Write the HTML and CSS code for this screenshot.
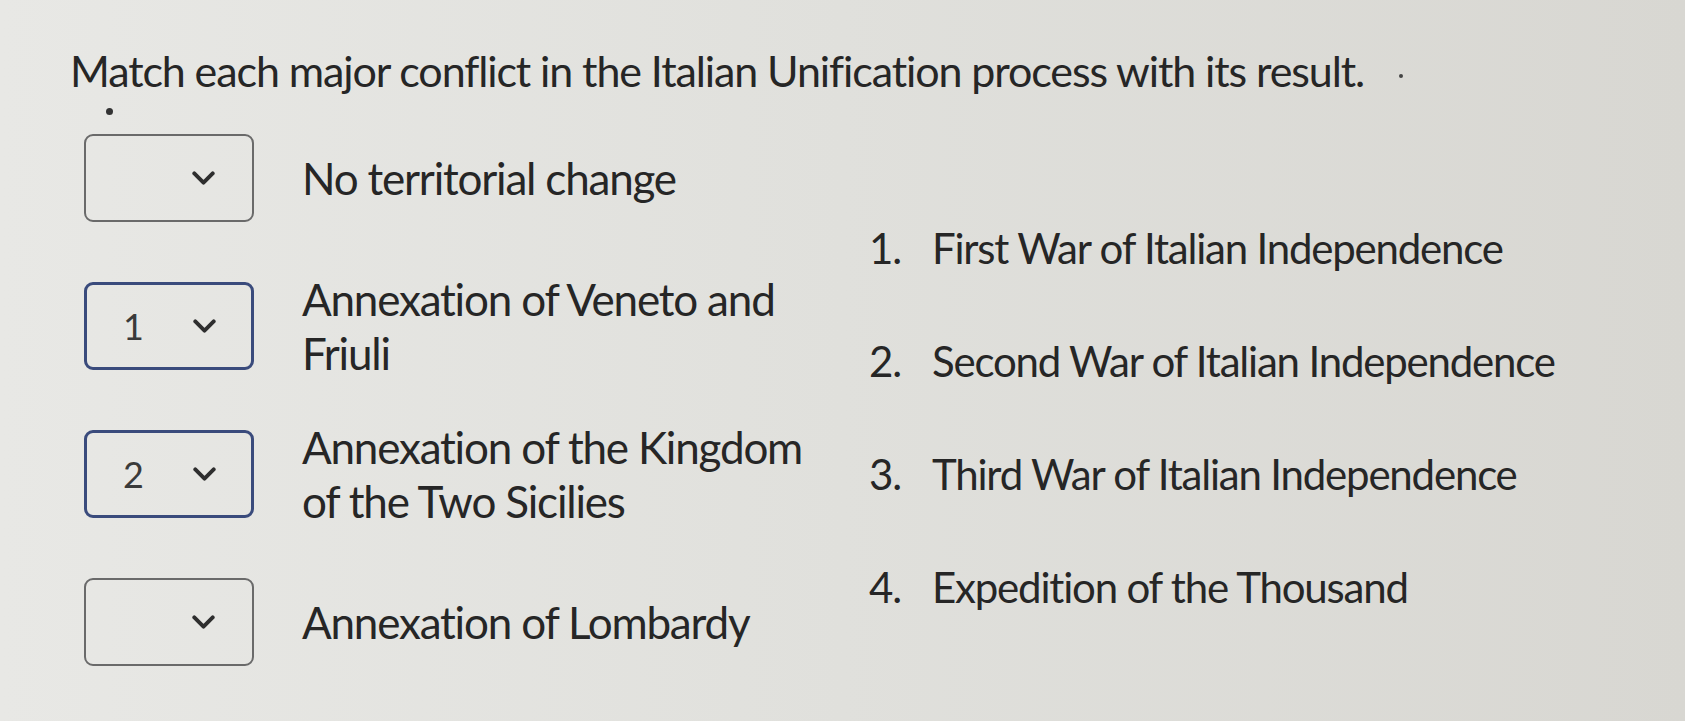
FILE: index.html
```html
<!DOCTYPE html>
<html lang="en">
<head>
    <meta charset="UTF-8">
    <meta name="viewport" content="width=device-width, initial-scale=1.0">
    <title>Matching Question</title>
    <link rel="stylesheet" href="styles.css">
</head>
<body>
    <div class="question">
        <h1 class="prompt">Match each major conflict in the Italian Unification process with its result.<span class="speck"></span></h1>
        <div class="match">
            <div class="answers">
                <div class="row">
                    <div class="select">
                        <span class="dot"></span>
                        <span class="value"></span>
                        <svg class="chevron" viewBox="0 0 20 12"><path d="M2 2 L10 10 L18 2"/></svg>
                    </div>
                    <div class="label">No territorial change</div>
                </div>
                <div class="row">
                    <div class="select filled">
                        <span class="value">1</span>
                        <svg class="chevron" viewBox="0 0 20 12"><path d="M2 2 L10 10 L18 2"/></svg>
                    </div>
                    <div class="label">Annexation of Veneto and Friuli</div>
                </div>
                <div class="row">
                    <div class="select filled">
                        <span class="value">2</span>
                        <svg class="chevron" viewBox="0 0 20 12"><path d="M2 2 L10 10 L18 2"/></svg>
                    </div>
                    <div class="label">Annexation of the Kingdom of the Two Sicilies</div>
                </div>
                <div class="row">
                    <div class="select">
                        <span class="value"></span>
                        <svg class="chevron" viewBox="0 0 20 12"><path d="M2 2 L10 10 L18 2"/></svg>
                    </div>
                    <div class="label">Annexation of Lombardy</div>
                </div>
            </div>
            <ol class="choices">
                <li>First War of Italian Independence</li>
                <li>Second War of Italian Independence</li>
                <li>Third War of Italian Independence</li>
                <li>Expedition of the Thousand</li>
            </ol>
        </div>
    </div>
</body>
</html>
```
FILE: styles.css
```css
body {
    font-family: Lato, "Open Sans", sans-serif;
    margin: 0;
    padding: 0;
    color: #262626;
    background: linear-gradient(90deg, #e8e8e5 0%, #e0e0dc 50%, #d8d7d2 100%);
    height: 100vh;
    overflow: hidden;
}
.question {
    padding: 38px 0 0 70px;
}
.prompt {
    position: relative;
    font-size: 43px;
    font-weight: 400;
    letter-spacing: -1.1px;
    margin: 0;
    line-height: 66px;
    height: 66px;
}
.speck {
    position: absolute;
    left: 1329px;
    top: 36px;
    width: 4px;
    height: 4px;
    border-radius: 50%;
    background: #444;
}
.match {
    display: flex;
}
.answers {
    width: 785px;
    padding-left: 14px;
}
.row {
    display: flex;
    align-items: center;
    height: 148px;
    gap: 48px;
}
.select {
    position: relative;
    flex: none;
    width: 170px;
    height: 88px;
    border: 2px solid #6a6a6a;
    border-radius: 9px;
    display: flex;
    align-items: center;
    padding-left: 36px;
    box-sizing: border-box;
}
.select.filled {
    border: 3px solid #3a4b7c;
}
.dot {
    position: absolute;
    left: 20px;
    top: -28px;
    width: 7px;
    height: 7px;
    border-radius: 50%;
    background: #333;
}
.value {
    width: 70px;
    font-size: 36px;
    color: #3a3a3a;
}
.chevron {
    width: 23px;
    height: 14px;
}
.chevron path {
    fill: none;
    stroke: #2e2e2e;
    stroke-width: 3.4;
    stroke-linecap: round;
    stroke-linejoin: round;
}
.label {
    font-size: 44px;
    letter-spacing: -1.2px;
    line-height: 54px;
    width: 530px;
}
.choices {
    margin: 0;
    padding: 117px 0 0 0;
    list-style: none;
    counter-reset: item;
}
.choices li {
    counter-increment: item;
    font-size: 42px;
    letter-spacing: -1.2px;
    line-height: 54px;
    height: 113px;
    display: flex;
}
.choices li::before {
    content: counter(item) ".";
    width: 63px;
}
```
